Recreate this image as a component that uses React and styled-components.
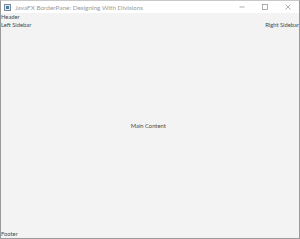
import React from "react";
import styled, { createGlobalStyle } from "styled-components";

const Global = createGlobalStyle`
  html, body { margin: 0; padding: 0; background: #ffffff; }
  #root { width: 300px; height: 239px; }
`;

const Window = styled.div`
  box-sizing: border-box;
  width: 300px;
  height: 239px;
  border: 1px solid #9a9a9a;
  border-top-color: #c8c8c8;
  display: flex;
  flex-direction: column;
  font-family: Lato, "Noto Sans", sans-serif;
  overflow: hidden;
`;

const TitleBar = styled.div`
  height: 12px;
  flex: none;
  background: #ffffff;
  display: flex;
  align-items: center;
  padding-left: 3px;
`;

const AppIcon = styled.div`
  width: 7px;
  height: 7px;
  box-sizing: border-box;
  border: 1px solid #7a8a9a;
  background: #dfe8ef;
  margin-right: 4px;
  display: flex;
  align-items: center;
  justify-content: center;
`;

const AppIconInner = styled.div`
  width: 3px;
  height: 3px;
  background: #4a7fa8;
`;

const Title = styled.div`
  font-size: 6.4px;
  color: #9a9a9a;
  white-space: nowrap;
  flex: 1;
`;

const Controls = styled.div`
  display: flex;
  height: 12px;
`;

const Ctrl = styled.div`
  width: 23px;
  height: 12px;
  display: flex;
  align-items: center;
  justify-content: center;
`;

const Content = styled.div`
  flex: 1;
  min-width: 0;
  background: #f3f3f3;
  display: flex;
  flex-direction: column;
  color: #4a4a4a;
  font-size: 5.8px;
  line-height: 7.6px;
  white-space: nowrap;
`;

const Middle = styled.div`
  flex: 1;
  display: flex;
  min-height: 0;
`;

const Side = styled.div`
  flex: none;
  align-self: flex-start;
`;

const Center = styled.div`
  flex: 1;
  display: flex;
  align-items: center;
  justify-content: center;
`;

const Label = styled.div``;

export default function App() {
  return (
    <>
      <Global />
      <Window>
        <TitleBar>
          <AppIcon><AppIconInner /></AppIcon>
          <Title>JavaFX BorderPane: Designing With Divisions</Title>
          <Controls>
            <Ctrl>
              <svg width="6" height="6" viewBox="0 0 6 6">
                <line x1="0.5" y1="3" x2="5.5" y2="3" stroke="#8a8a8a" strokeWidth="0.7" />
              </svg>
            </Ctrl>
            <Ctrl>
              <svg width="6" height="6" viewBox="0 0 6 6">
                <rect x="0.5" y="0.5" width="5" height="5" fill="none" stroke="#8a8a8a" strokeWidth="0.7" />
              </svg>
            </Ctrl>
            <Ctrl>
              <svg width="6" height="6" viewBox="0 0 6 6">
                <path d="M0.5 0.5 L5.5 5.5 M5.5 0.5 L0.5 5.5" stroke="#8a8a8a" strokeWidth="0.7" />
              </svg>
            </Ctrl>
          </Controls>
        </TitleBar>
        <Content>
          <Label>Header</Label>
          <Middle>
            <Side>Left Sidebar</Side>
            <Center>Main Content</Center>
            <Side>Right Sidebar</Side>
          </Middle>
          <Label>Footer</Label>
        </Content>
      </Window>
    </>
  );
}
